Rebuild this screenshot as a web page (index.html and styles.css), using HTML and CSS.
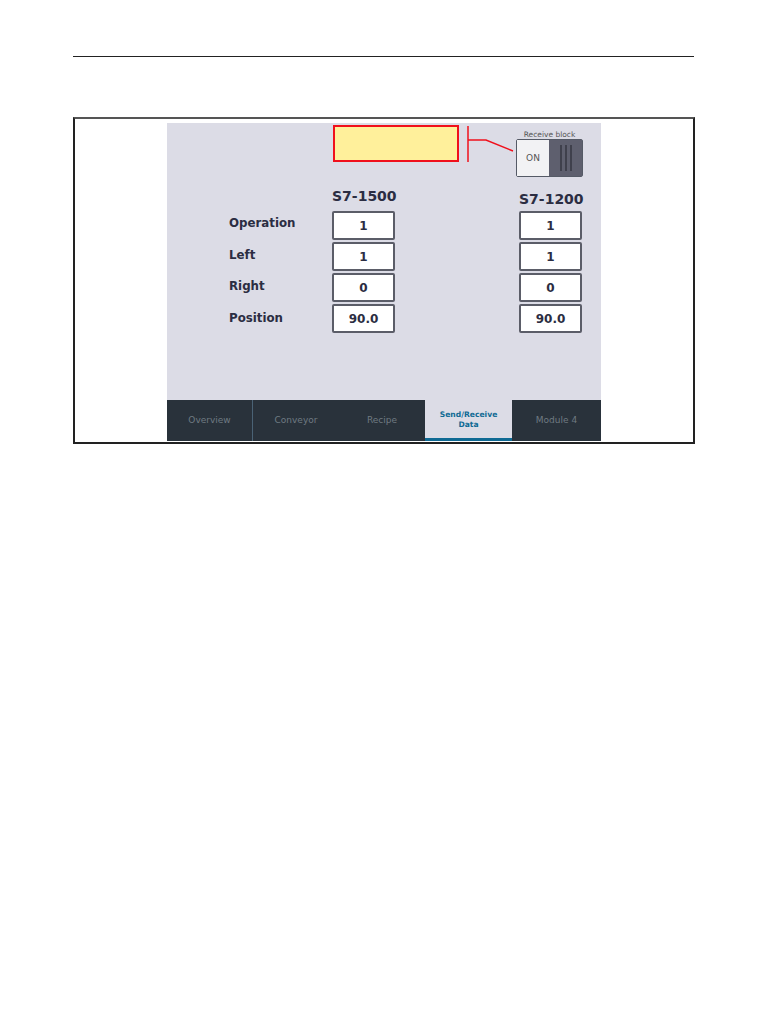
FILE: index.html
```html
<!DOCTYPE html>
<html>
<head>
  <meta charset="UTF-8">
  <meta name="viewport" content="width=device-width, initial-scale=1.0">
  <link rel="stylesheet" href="styles.css">
</head>
<body>
<div class="page-rule"></div>
<div class="figure">
  <div class="screen">
    <div class="top-row">
      <div class="note-box"></div>
      <div class="receive-block">
        <div class="toggle-label">Receive block</div>
        <div class="toggle">
          <div class="toggle-on">ON</div>
          <div class="toggle-grip"><span></span><span></span><span></span></div>
        </div>
      </div>
      <svg class="callout" width="50" height="38" viewBox="0 0 50 38">
        <path d="M1 0V36M1 14H19L46 25" fill="none" stroke="#f0101c" stroke-width="1.5"/>
      </svg>
    </div>
    <div class="data">
      <div class="labels">
        <div class="label">Operation</div>
        <div class="label">Left</div>
        <div class="label">Right</div>
        <div class="label">Position</div>
      </div>
      <div class="plc plc-1500">
        <div class="plc-name">S7-1500</div>
        <div class="value">1</div>
        <div class="value">1</div>
        <div class="value">0</div>
        <div class="value">90.0</div>
      </div>
      <div class="plc plc-1200">
        <div class="plc-name">S7-1200</div>
        <div class="value">1</div>
        <div class="value">1</div>
        <div class="value">0</div>
        <div class="value">90.0</div>
      </div>
    </div>
    <div class="tabs">
      <div class="tab tab-first">Overview</div>
      <div class="tab">Conveyor</div>
      <div class="tab">Recipe</div>
      <div class="tab tab-active">Send/Receive<br>Data</div>
      <div class="tab tab-last">Module 4</div>
    </div>
  </div>
</div>
</body>
</html>
```

FILE: styles.css
```css
body {
  margin: 0;
  background: #fff;
  font-family: "DejaVu Sans", sans-serif;
  color: #2b2d42;
}

.page-rule {
  height: 1px;
  margin: 56px 74px 0 73px;
  background: #222;
}

.figure {
  box-sizing: border-box;
  width: 622px;
  height: 327px;
  margin: 60px 0 0 73px;
  padding: 4px 92px 1px 92px;
  border: 2px solid #222;
  border-top-color: #555;
}

.screen {
  width: 434px;
  height: 318px;
  display: flex;
  flex-direction: column;
  background: #dcdce6;
}

.top-row {
  position: relative;
  height: 54px;
  display: flex;
  justify-content: space-between;
  padding: 2px 18px 0 166px;
  box-sizing: border-box;
}

.note-box {
  box-sizing: border-box;
  width: 126px;
  height: 37px;
  background: #fff09b;
  border: 2px solid #f0101c;
}

.receive-block {
  width: 67px;
  margin-top: 5px;
}

.toggle-label {
  height: 9px;
  font-size: 7.5px;
  line-height: 9px;
  text-align: center;
  color: #555;
  white-space: nowrap;
}

.toggle {
  box-sizing: border-box;
  height: 38px;
  display: flex;
  border: 1px solid #555a66;
  border-radius: 2px;
}

.toggle-on {
  width: 32px;
  background: #f2f2f4;
  font-size: 9px;
  line-height: 36px;
  text-align: center;
  color: #555;
}

.toggle-grip {
  flex: 1;
  display: flex;
  justify-content: center;
  gap: 3px;
  padding: 5px 0;
  background: #5e5f6e;
}

.toggle-grip span {
  width: 2px;
  background: #3f404c;
}

.callout {
  position: absolute;
  left: 300px;
  top: 3px;
}

.data {
  height: 223px;
  display: flex;
}

.labels {
  width: 103px;
  padding: 31px 0 0 62px;
  font-size: 11.8px;
  font-weight: bold;
}

.label {
  height: 31.6px;
  line-height: 31.6px;
}

.plc {
  width: 63px;
}

.plc-1500 {
  margin: 0 124px 0 0;
}

.plc-name {
  height: 34px;
  font-size: 14px;
  font-weight: bold;
  line-height: 38px;
  white-space: nowrap;
  text-align: center;
}

.plc-1200 .plc-name {
  line-height: 44px;
}

.value {
  box-sizing: border-box;
  height: 29px;
  margin-bottom: 2px;
  background: #fff;
  border: 2px solid #5b5d68;
  border-radius: 2px;
  font-size: 12px;
  font-weight: bold;
  line-height: 27px;
  text-align: center;
}

.tabs {
  height: 41px;
  display: flex;
  background: #29323b;
}

.tab {
  box-sizing: border-box;
  width: 86px;
  font-size: 9px;
  line-height: 41px;
  text-align: center;
  color: #6f7a82;
}

.tab-first {
  width: 86px;
  border-right: 1px solid #4a6275;
}

.tab-active {
  width: 87px;
  padding-top: 10px;
  background: #dcdce6;
  border-bottom: 3px solid #0f6a94;
  font-size: 7.6px;
  font-weight: bold;
  line-height: 10px;
  color: #0f6a94;
}

.tab-last {
  width: 89px;
}
```
